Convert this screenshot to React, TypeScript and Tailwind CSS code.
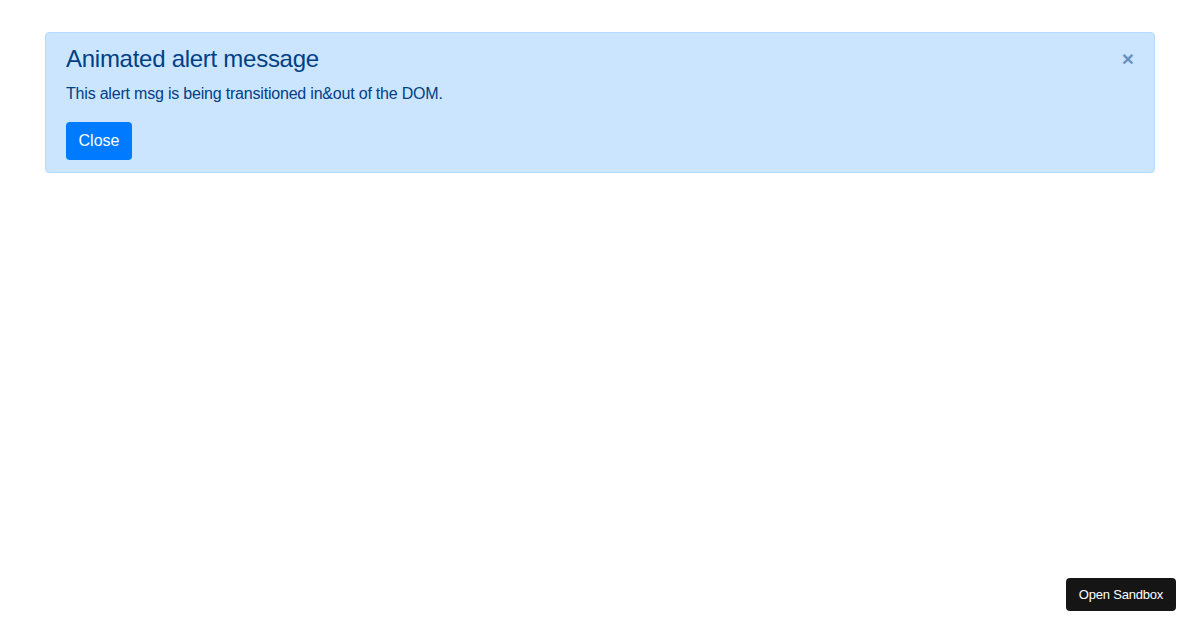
import React, { useState } from 'react';

const App: React.FC = () => {
  const [show, setShow] = useState(true);

  return (
    <div className="min-h-screen bg-white" style={{ fontFamily: '"Liberation Sans", Arial, sans-serif' }}>
      <div className="mx-auto w-[1110px] pt-8">
        {show && (
          <div className="relative rounded-[4px] border border-[#b8daff] bg-[#cce5ff] px-5 py-3 text-[#004085]">
            <h4 className="mb-2 text-[24px] leading-[1.2] font-medium tracking-[-0.27px]">Animated alert message</h4>
            <p className="mb-4 text-[16px] leading-6 tracking-[-0.2px]">This alert msg is being transitioned in&amp;out of the DOM.</p>
            <button
              onClick={() => setShow(false)}
              className="h-[38px] w-[66px] rounded-[4px] bg-[#007bff] text-[16px] leading-6 text-white"
            >
              Close
            </button>
            <button
              onClick={() => setShow(false)}
              className="absolute top-[15px] right-0 px-5 text-[21px] leading-none font-bold text-[#004085] opacity-50"
            >
              ×
            </button>
          </div>
        )}
      </div>
      <a className="fixed right-6 bottom-[19px] flex h-[33px] w-[110px] items-center justify-center rounded-[4px] bg-[#151515] text-[13px] tracking-[-0.2px] text-white">
        Open Sandbox
      </a>
    </div>
  );
};

export default App;
